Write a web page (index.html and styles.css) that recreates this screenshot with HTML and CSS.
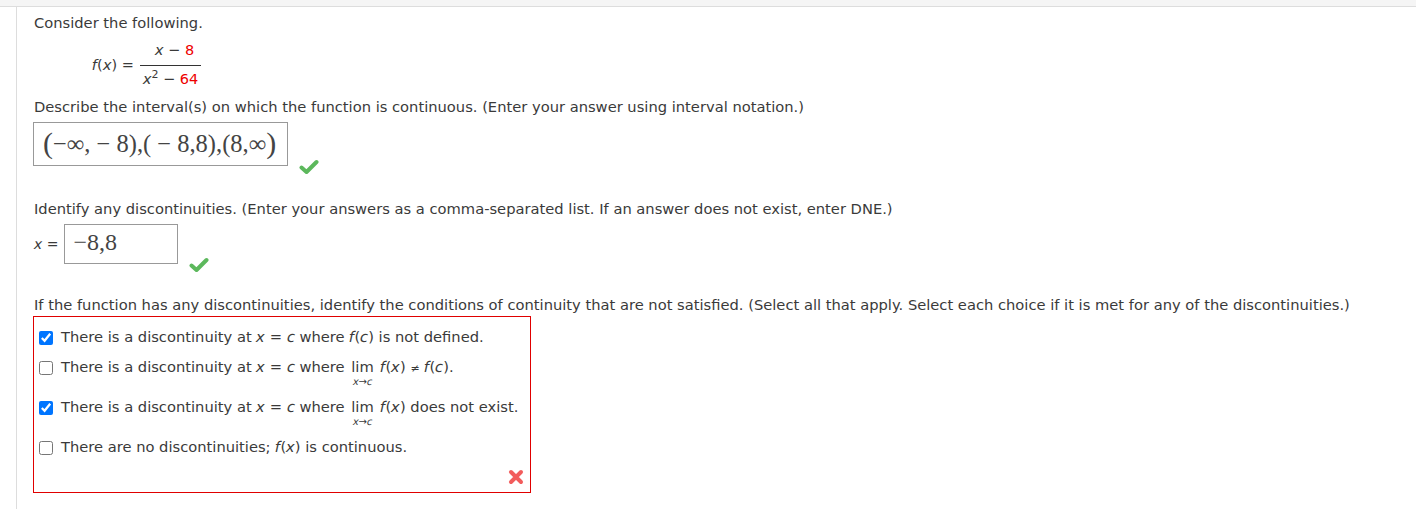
FILE: index.html
```html
<!DOCTYPE html>
<html lang="en">
  <head>
    <meta charset="utf-8" />
    <title>Continuity</title>
    <link rel="stylesheet" href="styles.css">
  </head>
  <body>
    <div class="topbar"></div>
    <div class="question">
      <p class="prompt">Consider the following.</p>

      <div class="formula">
        <span class="fx"><i>f</i>(<i>x</i>) =</span>
        <span class="frac">
          <span class="num"><i>x</i> &minus; <span class="red">8</span></span>
          <span class="den"><i>x</i><sup>2</sup> &minus; <span class="red">64</span></span>
        </span>
      </div>

      <p class="prompt">Describe the interval(s) on which the function is continuous. (Enter your answer using interval notation.)</p>
      <div class="answer-row">
        <div class="math-box wide"><span class="big">(</span>&minus;&infin;, &minus; 8),( &minus; 8,8),(8,&infin;<span class="big">)</span></div>
        <svg class="check" width="20" height="16" viewBox="0 0 20 16"><path d="M2.5 8.5 L7.5 13 L17.5 3" fill="none" stroke="#5cb85c" stroke-width="4" stroke-linecap="round" stroke-linejoin="round"/></svg>
      </div>

      <p class="prompt second">Identify any discontinuities. (Enter your answers as a comma-separated list. If an answer does not exist, enter DNE.)</p>
      <div class="answer-row">
        <span class="label"><i>x</i> =</span>
        <div class="math-box small">&minus;8,8</div>
        <svg class="check" width="20" height="16" viewBox="0 0 20 16"><path d="M2.5 8.5 L7.5 13 L17.5 3" fill="none" stroke="#5cb85c" stroke-width="4" stroke-linecap="round" stroke-linejoin="round"/></svg>
      </div>

      <p class="prompt third">If the function has any discontinuities, identify the conditions of continuity that are not satisfied. (Select all that apply. Select each choice if it is met for any of the discontinuities.)</p>
      <div class="choices">
        <label class="choice"><input type="checkbox" checked> <span>There is a discontinuity at <i>x</i> = <i>c</i> where <i>f</i>(<i>c</i>) is not defined.</span></label>
        <label class="choice"><input type="checkbox"> <span>There is a discontinuity at <i>x</i> = <i>c</i> where <span class="lim"><span class="lim-word">lim</span><span class="lim-sub"><i>x</i>&rarr;<i>c</i></span></span> <i>f</i>(<i>x</i>) <span class="ne">&ne;</span> <i>f</i>(<i>c</i>).</span></label>
        <label class="choice"><input type="checkbox" checked> <span>There is a discontinuity at <i>x</i> = <i>c</i> where <span class="lim"><span class="lim-word">lim</span><span class="lim-sub"><i>x</i>&rarr;<i>c</i></span></span> <i>f</i>(<i>x</i>) does not exist.</span></label>
        <label class="choice"><input type="checkbox"> <span>There are no discontinuities; <i>f</i>(<i>x</i>) is continuous.</span></label>
        <div class="mark">
          <svg width="16" height="16" viewBox="0 0 16 16"><path d="M3 3 L13 13 M13 3 L3 13" stroke="#f25c5c" stroke-width="4" stroke-linecap="round"/></svg>
        </div>
      </div>
    </div>
  </body>
</html>
```

FILE: styles.css
```css
body {
  margin: 0;
  font-family: "DejaVu Sans", Verdana, sans-serif;
  font-size: 14.7px;
  color: #3a3a3a;
  background: #ffffff;
}
i {
  display: inline-block;
  font-style: normal;
  transform: skewX(-12deg);
}
.topbar {
  height: 6px;
  background: #f5f5f5;
  border-bottom: 1px solid #dddddd;
}
.question {
  margin-left: 16px;
  border-left: 1px solid #dddddd;
  padding: 0 0 20px 17px;
  min-height: 480px;
}
.prompt {
  margin: 0;
  line-height: 20px;
  padding-top: 6px;
}
.prompt.second {
  padding-top: 33px;
}
.prompt.third {
  padding-top: 31px;
}
.formula {
  display: flex;
  align-items: center;
  margin: 6px 0 1px 58px;
  font-size: 14.5px;
}
.fx {
  margin-right: 6px;
}
.frac {
  display: inline-flex;
  flex-direction: column;
  align-items: center;
}
.num {
  padding: 0 6px 4px 14px;
  line-height: 22px;
}
.den {
  border-top: 1px solid #333333;
  padding: 2px 3px 0;
  line-height: 22px;
}
.den sup {
  font-size: 11px;
  vertical-align: 6px;
  line-height: 0;
}
.red {
  color: #ee0000;
}
.answer-row {
  display: flex;
  align-items: flex-end;
  margin-top: 5px;
}
.math-box {
  border: 1px solid #999999;
  font-family: "Liberation Serif", "DejaVu Serif", serif;
  color: #444444;
  box-sizing: border-box;
}
.math-box.wide {
  width: 255px;
  height: 44px;
  font-size: 24.5px;
  line-height: 40px;
  padding-left: 9px;
  margin-left: -1px;
}
.big {
  font-size: 30px;
  vertical-align: -1px;
}
.math-box.small {
  width: 114px;
  height: 40px;
  font-size: 24px;
  line-height: 34px;
  padding-left: 8px;
}
.label {
  font-size: 14px;
  align-self: center;
  margin-right: 6px;
}
.check {
  margin: 0 0 -9px 11px;
}
.choices {
  margin-top: 1px;
  margin-left: -1px;
  width: 492px;
  border: 1px solid #e00000;
  padding: 10px 0 0 4px;
}
.choice {
  display: flex;
  align-items: flex-start;
  line-height: 20px;
  margin-bottom: 10px;
}
.choice input {
  margin: 4px 8px 0 1px;
  width: 14px;
  height: 14px;
  flex: none;
}
.lim {
  display: inline-flex;
  flex-direction: column;
  align-items: center;
  vertical-align: top;
  margin: 0 2px;
}
.lim-word {
  line-height: 20px;
}
.lim-sub {
  font-size: 10px;
  line-height: 10px;
}
.ne {
  font-size: 11px;
}
.mark {
  display: flex;
  justify-content: flex-end;
  padding: 2px 6px 7px 0;
}
```
